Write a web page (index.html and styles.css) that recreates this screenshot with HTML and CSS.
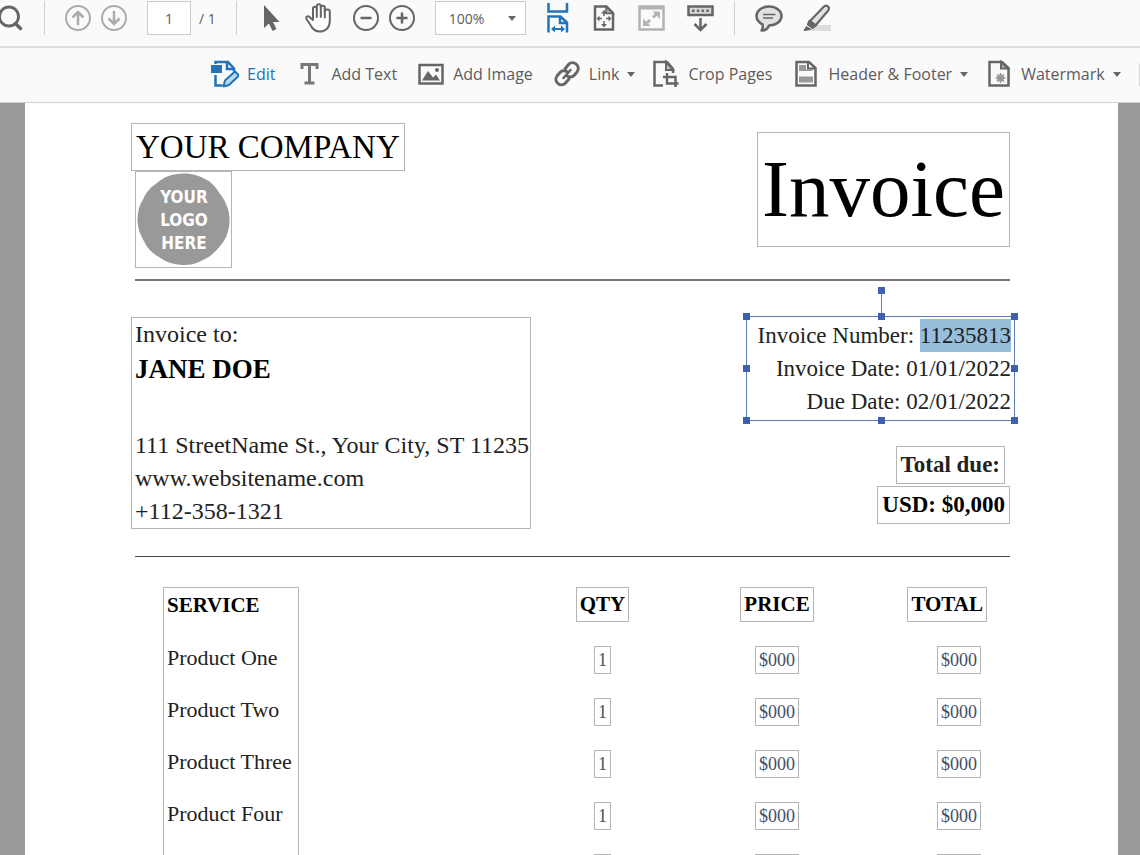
FILE: index.html
```html
<!DOCTYPE html>
<html lang="en">
<head>
  <meta charset="UTF-8">
  <meta name="viewport" content="width=device-width, initial-scale=1">
  <title>Invoice</title>
  <link rel="stylesheet" href="styles.css">
</head>
<body>
  <!-- View toolbar -->
  <div class="toolbar view-bar">
    <button class="icon-btn" aria-label="Search">
      <svg width="24" height="28" viewBox="0 0 24 28" fill="none" stroke="#666" stroke-width="2.800"><circle cx="9" cy="12.500" r="9.500"/><path d="M15.500 19.500L20.500 24.500" stroke-width="3.500" stroke-linecap="round"/></svg>
    </button>
    <span class="divider"></span>
    <div class="pair">
      <button class="icon-btn" aria-label="Previous page">
        <svg width="26" height="26" viewBox="0 0 26 26" fill="none" stroke="#ababab" stroke-width="2"><circle cx="13" cy="13" r="12"/><path d="M13 20V7M7.500 12.500L13 7l5.500 5.500" stroke-width="2.500"/></svg>
      </button>
      <button class="icon-btn" aria-label="Next page">
        <svg width="26" height="26" viewBox="0 0 26 26" fill="none" stroke="#ababab" stroke-width="2"><circle cx="13" cy="13" r="12"/><path d="M13 6v13M7.500 13.500L13 19l5.500-5.500" stroke-width="2.500"/></svg>
      </button>
    </div>
    <div class="pages">
      <input class="page-input" type="text" value="1" aria-label="Page number">
      <span>/ 1</span>
    </div>
    <span class="divider"></span>
    <button class="icon-btn" aria-label="Select">
      <svg width="28" height="30" viewBox="0 0 28 30"><path d="M7 2v23l5-4.500 3.500 7.500 4-2-3.500-7h6.500z" fill="#666"/></svg>
    </button>
    <button class="icon-btn" aria-label="Hand">
      <svg width="28" height="30" viewBox="0 0 28 30" fill="#fff" stroke="#666" stroke-width="2" stroke-linejoin="round" stroke-linecap="round"><path d="M8 17V5.500c0-2.500 3.800-2.500 3.800 0V3.300c0-2.700 4-2.700 4 0v1.400c0-2.500 4-2.500 4 0V8.500c0-2.600 5-2.600 5 0V18c0 6.500-4.300 10.500-10 10.500-4.800 0-7.300-2.500-9-6L1.500 16c-1-2.500 1.800-3.800 3.300-1.600z"/><path d="M11.800 5.500V14M15.800 4.500V14M19.800 5v9.500" fill="none"/></svg>
    </button>
    <div class="pair">
      <button class="icon-btn" aria-label="Zoom out">
        <svg width="26" height="26" viewBox="0 0 26 26" fill="none" stroke="#666" stroke-width="2"><circle cx="13" cy="13" r="12"/><path d="M7.500 13h11" stroke-width="2.500"/></svg>
      </button>
      <button class="icon-btn" aria-label="Zoom in">
        <svg width="26" height="26" viewBox="0 0 26 26" fill="none" stroke="#666" stroke-width="2"><circle cx="13" cy="13" r="12"/><path d="M7.500 13h11M13 7.500v11" stroke-width="2.500"/></svg>
      </button>
    </div>
    <div class="zoom">
      <select class="zoom-select" aria-label="Zoom level">
        <option>100%</option>
      </select>
      <span class="caret"></span>
    </div>
    <div class="fit">
      <button class="icon-btn" aria-label="Fit width">
        <svg width="24" height="30" viewBox="0 0 24 30" fill="none" stroke="#2373b9" stroke-width="2.500"><path d="M2.500 0v8.500h18.500V0M2.500 29.500V13.500h12l6.500 6v10M14 13.500v6.500h7"/><path d="M7 26h10" stroke-width="2"/><path d="M5 26l4-3.500v7zM19 26l-4-3.500v7z" fill="#2373b9" stroke="none"/></svg>
      </button>
      <button class="icon-btn" aria-label="Fit page">
        <svg width="24" height="28" viewBox="0 0 24 28" fill="none" stroke="#666" stroke-width="2.500"><path d="M3 2.500h11.500l6.500 6.500v16.500H3z"/><path d="M14 3v6.500h7z" fill="#aaa" stroke-width="1.500"/><path d="M12 8v4M12 17v5M6 14.500h4M14 14.500h4" stroke-width="1.500"/><path d="M12 6l3 3.500H9zM12 23.500l3-3.500H9zM4.500 14.500l3-3v6zM19.500 14.500l-3-3v6z" fill="#666" stroke="none"/></svg>
      </button>
      <button class="icon-btn" aria-label="Full screen">
        <svg width="27" height="28" viewBox="0 0 27 28" fill="none" stroke="#b3b3b3"><path d="M1.500 2.500h24v23h-24z" stroke-width="2.500"/><path d="M1 4h25" stroke-width="3"/><path d="M15 13.500l5-5M12 16l-5 5" stroke-width="3"/><path d="M14.500 7.500H22V15zM5 14.500V22h7.500z" fill="#b3b3b3" stroke="none"/></svg>
      </button>
      <button class="icon-btn" aria-label="Scrolling">
        <svg width="27" height="28" viewBox="0 0 27 28" fill="none" stroke="#666" stroke-width="2.500"><path d="M1.500 2.500h24v8.500h-24z" fill="#d8d8d8"/><path d="M5 6.700h17" stroke-dasharray="2.500 2.300"/><path d="M13.500 14v11.500M7.500 20l6 6 6-6"/></svg>
      </button>
    </div>
    <span class="divider"></span>
    <button class="icon-btn" aria-label="Comment">
      <svg width="28" height="28" viewBox="0 0 28 28" fill="#e2e2e2" stroke="#666" stroke-width="2.500" stroke-linejoin="round"><path d="M14 2.500c7 0 12.500 4 12.500 9.500S21 21.500 14 21.500c-1 3-4 5-7.500 5 1.500-2 1.500-4 1-6.200C4 18.500 1.500 15.500 1.500 12c0-5.500 5.500-9.500 12.500-9.500z"/><path d="M8 10.500h12.500M8 14h10" stroke-width="1.500"/></svg>
    </button>
    <button class="icon-btn" aria-label="Highlight">
      <svg width="28" height="28" viewBox="0 0 28 28" stroke="#666" stroke-width="2.200" stroke-linejoin="round"><path d="M11 21h17v6H7z" fill="#ddd" stroke="none"/><path d="M7 17L20.500 3c3-3 7 0 4.700 3.500L12.500 21.500z" fill="#e2e2e2"/><path d="M6.500 17l6 4.500-3 2.500-4.500-3.500z" fill="#666"/><path d="M3.500 22.500l4.500 3-7 1z" fill="#666" stroke-width="1"/></svg>
    </button>
  </div>

  <!-- Edit toolbar -->
  <div class="toolbar edit-bar">
    <button class="tool active">
      <svg width="28" height="30" viewBox="0 0 28 30" fill="none" stroke="#2373b9" stroke-width="2.500"><path d="M4.500 5V3h12.500l6 6.500v3M16 3v7h7M4.500 16v10.500h7"/><path d="M0 6h11v8H0z" fill="#2373b9" stroke="none"/><path d="M12.500 27.500l1.500-6L24 12.500l4 4-10 9.500z" fill="#b9dcf5" stroke-width="2" stroke-linejoin="round"/></svg>
      Edit
    </button>
    <button class="tool">
      <svg width="28" height="30" viewBox="0 0 28 30" fill="none" stroke="#777" stroke-width="3"><path d="M7 10V5.500h15V10M14.500 5.500V24M9.500 24h10"/></svg>
      Add Text
    </button>
    <button class="tool">
      <svg width="28" height="30" viewBox="0 0 28 30" fill="none" stroke="#666" stroke-width="2.500"><path d="M2.500 6h23v18.500h-23z"/><path d="M5 21.500l6-9.500 5 6.500 3-3 4 6z" fill="#666" stroke="none"/><circle cx="20" cy="11" r="2" fill="#666" stroke="none"/></svg>
      Add Image
    </button>
    <button class="tool has-menu">
      <svg width="28" height="30" viewBox="0 0 28 30" fill="none" stroke="#666" stroke-width="3" stroke-linecap="round"><path d="M12 10l3.500-4.500c4.500-5 13 1.500 8.500 7.500l-3 3.500c-2 2.300-5.500 2-7.500 0"/><path d="M16 20l-3.500 4c-4.500 5-12.500-1-8.500-7l3-3.500c2-2.200 5.500-2.200 7.500-.5"/><path d="M10.500 19l7-8" stroke-width="2.500"/></svg>
      Link
      <span class="caret"></span>
    </button>
    <button class="tool">
      <svg width="28" height="30" viewBox="0 0 28 30" fill="none" stroke="#666" stroke-width="2.500"><path d="M11 26.500H2.500V3h12.500l6 7v4"/><path d="M14 3v8h7z" fill="#ccc" stroke-width="2"/><path d="M11 18h12.500v10M15 14v10.500h11.500"/></svg>
      Crop Pages
    </button>
    <button class="tool has-menu">
      <svg width="28" height="30" viewBox="0 0 28 30" fill="none" stroke="#666" stroke-width="2.500"><path d="M4.500 3H17l6.500 6v17.500h-19z"/><path d="M7 6h7v4.500h6.500V12H7zM7 17.500h14v6H7z" fill="#999" stroke="none"/><path d="M16 3v6.500h7" stroke-width="2"/></svg>
      Header &amp; Footer
      <span class="caret"></span>
    </button>
    <button class="tool has-menu">
      <svg width="28" height="30" viewBox="0 0 28 30" fill="none" stroke="#666" stroke-width="2.500"><path d="M4.500 3H17l6.500 6v17.500h-19z"/><path d="M16 3v6.500h7z" fill="#bbb" stroke-width="2"/><circle cx="15.500" cy="19" r="3.500" fill="#999" stroke="none"/><path d="M15.500 14v10M10.500 19h10M12 15.500l7 7M19 15.500l-7 7" stroke="#999" stroke-width="1.500"/></svg>
      Watermark
      <span class="caret"></span>
    </button>
    <button class="tool" aria-label="More tools">
      <svg width="28" height="30" viewBox="0 0 28 30" fill="none" stroke="#666" stroke-width="2.500"><path d="M3 6h20v20H3z" fill="#aaa"/></svg>
    </button>
  </div>

  <main class="workspace">
    <div class="sheet">
      <header class="invoice-header">
        <div>
          <div class="box company">YOUR COMPANY</div>
          <div class="box logo">
            <svg width="95" height="95" viewBox="0 0 95 95">
              <path d="M47.500 1.500c8 0 14 1.500 20.500 5 7 3 11.500 8 15 14 5 6 8 12.500 9.500 18.500 1.500 8 1.500 13-.5 20-1.500 7-5.500 13-10.500 18-5 6-10.500 9.500-16.500 12-8 4-14.500 4.500-21 3.800-7-.5-14-2.800-19.500-6.800C17 82 11.500 77 8.500 70 4 63 1.500 55 1.500 47.500c0-8 2-15 6-21 3-7 8-12 13.500-15.500C28 5 36 1.500 47.500 1.500z" fill="#999"/>
              <g class="logo-text">
                <text x="48" y="31">YOUR</text>
                <text x="48" y="54">LOGO</text>
                <text x="48" y="77">HERE</text>
              </g>
            </svg>
          </div>
        </div>
        <h1 class="box title">Invoice</h1>
      </header>

      <section class="parties">
        <div class="box customer">
          <p>Invoice to:</p>
          <h2>JANE DOE</h2>
          <p>111 StreetName St., Your City, ST 11235</p>
          <p>www.websitename.com</p>
          <p>+112-358-1321</p>
        </div>
        <div class="summary">
          <div class="details">
            <p>Invoice Number: <span class="highlight">11235813</span></p>
            <p>Invoice Date: 01/01/2022</p>
            <p>Due Date: 02/01/2022</p>
            <!-- resize handles -->
            <span class="stem"></span>
            <span class="handle rotate"></span>
            <span class="handle top left"></span>
            <span class="handle top center"></span>
            <span class="handle top right"></span>
            <span class="handle middle left"></span>
            <span class="handle middle right"></span>
            <span class="handle bottom left"></span>
            <span class="handle bottom center"></span>
            <span class="handle bottom right"></span>
          </div>
          <div class="box due-label">Total due:</div>
          <div class="box due-amount">USD: $0,000</div>
        </div>
      </section>

      <table class="items">
        <thead>
          <tr>
            <th class="service"><div>SERVICE</div></th>
            <th class="qty"><span class="box">QTY</span></th>
            <th class="price"><span class="box">PRICE</span></th>
            <th class="total"><span class="box">TOTAL</span></th>
          </tr>
        </thead>
        <tbody>
          <tr>
            <td class="service"><div>Product One</div></td>
            <td class="qty"><span class="box">1</span></td>
            <td class="price"><span class="box">$000</span></td>
            <td class="total"><span class="box">$000</span></td>
          </tr>
          <tr>
            <td class="service"><div>Product Two</div></td>
            <td class="qty"><span class="box">1</span></td>
            <td class="price"><span class="box">$000</span></td>
            <td class="total"><span class="box">$000</span></td>
          </tr>
          <tr>
            <td class="service"><div>Product Three</div></td>
            <td class="qty"><span class="box">1</span></td>
            <td class="price"><span class="box">$000</span></td>
            <td class="total"><span class="box">$000</span></td>
          </tr>
          <tr>
            <td class="service"><div>Product Four</div></td>
            <td class="qty"><span class="box">1</span></td>
            <td class="price"><span class="box">$000</span></td>
            <td class="total"><span class="box">$000</span></td>
          </tr>
          <tr>
            <td class="service"><div>Product Five</div></td>
            <td class="qty"><span class="box">1</span></td>
            <td class="price"><span class="box">$000</span></td>
            <td class="total"><span class="box">$000</span></td>
          </tr>
        </tbody>
      </table>
    </div>
  </main>
</body>
</html>
```
FILE: styles.css
```css
* {
  box-sizing: border-box;
}

body {
  margin: 0;
  height: 100vh;
  display: flex;
  flex-direction: column;
  overflow: hidden;
  font-family: "Open Sans", "Noto Sans", sans-serif;
  color: #5c5c5c;
}

h1, h2, p {
  margin: 0;
}

/* Toolbars */
.toolbar {
  display: flex;
  flex-shrink: 0;
  align-items: center;
  gap: 20px;
  overflow: hidden;
  background-color: #fafafa;
  white-space: nowrap;
}

.toolbar > * {
  flex-shrink: 0;
}

.view-bar {
  height: 48px;
  padding-bottom: 10px;
  border-bottom: 2px solid #dcdcdc;
  font-size: 14px;
}

.edit-bar {
  height: 55px;
  padding: 0 0 2px 211px;
  border-bottom: 1px solid #d0d0d0;
}

button {
  padding: 0;
  border: none;
  background: none;
  font: inherit;
  color: inherit;
  cursor: pointer;
}

.icon-btn {
  display: flex;
}

.divider {
  width: 1px;
  height: 34px;
  background-color: #d0d0d0;
}

.pair {
  display: flex;
  gap: 10px;
}

.fit {
  display: flex;
  align-items: center;
  gap: 22px;
}

.pages {
  display: flex;
  align-items: center;
  gap: 8px;
}

.page-input {
  width: 44px;
  height: 34px;
  padding: 0;
  border: 1px solid #ccc;
  background-color: #fff;
  font: inherit;
  color: inherit;
  text-align: center;
}

.zoom {
  display: flex;
  position: relative;
}

.zoom-select {
  width: 91px;
  height: 34px;
  padding: 0 13px;
  border: 1px solid #ccc;
  border-radius: 0;
  background-color: #fff;
  appearance: none;
  font: inherit;
  color: inherit;
}

.caret {
  border: 4px solid transparent;
  border-top: 5px solid #666;
  border-bottom: none;
}

.zoom .caret {
  position: absolute;
  right: 10px;
  top: 15px;
  pointer-events: none;
}

.tool {
  display: flex;
  align-items: center;
  gap: 8px;
  font-size: 16px;
}

.has-menu {
  margin-right: -3px;
}

.active {
  color: #2373b9;
}

/* Page */
.workspace {
  flex: 1;
  min-height: 0;
  overflow: hidden;
  padding: 0 22px 0 25px;
  background-color: #999;
}

.sheet {
  min-height: 100%;
  padding: 20px 108px 0 110px;
  background-color: #fff;
  font-family: "Liberation Serif", serif;
  font-size: 23px;
  line-height: 33px;
  color: #222;
}

.box {
  border: 1px solid #b5b5b5;
  padding: 0 4px;
}

.invoice-header {
  display: flex;
  justify-content: space-between;
  align-items: flex-start;
  padding-bottom: 11px;
  border-bottom: 2px solid #777;
}

.company {
  margin-left: -4px;
  font-size: 33px;
  line-height: 46px;
  color: #000;
}

.logo {
  width: 97px;
  padding: 0;
}

.logo svg {
  display: block;
}

.logo-text {
  font: bold 17px "Liberation Sans Narrow", "DejaVu Sans Condensed", sans-serif;
  fill: #fff;
  text-anchor: middle;
}

.title {
  margin-top: 9px;
  font-size: 81px;
  font-weight: normal;
  line-height: 113px;
  color: #000;
}

.parties {
  display: flex;
  justify-content: space-between;
  align-items: flex-start;
  padding: 36px 0 27px;
  border-bottom: 1px solid #444;
}

.customer {
  width: 400px;
  margin-left: -4px;
  padding: 0 3px;
  font-size: 24px;
  white-space: nowrap;
}

.customer h2 {
  margin-bottom: 42px;
  font-size: 27px;
  line-height: 36px;
  color: #000;
}

.summary {
  display: flex;
  flex-direction: column;
  align-items: flex-end;
  margin-top: -1px;
}

/* Selected text box */
.details {
  position: relative;
  width: 269px;
  margin: 0 -5px 25px 0;
  padding: 2px 3px;
  border: 1px solid #5f7fb0;
  text-align: right;
}

.highlight {
  display: inline-block;
  background-color: #97bfdc;
}

.handle {
  position: absolute;
  width: 7px;
  height: 7px;
  background-color: #3f60ae;
}

.stem {
  position: absolute;
  left: 50%;
  top: -24px;
  height: 24px;
  border-left: 1px solid #5f7fb0;
}

.top { top: -4px; }
.middle { top: calc(50% - 4px); }
.bottom { bottom: -4px; }
.left { left: -4px; }
.center { left: calc(50% - 3px); }
.right { right: -4px; }

.rotate {
  left: calc(50% - 3px);
  top: -30px;
}

.due-label,
.due-amount {
  padding: 1px 4px 2px;
  font-weight: bold;
}

.due-label {
  margin: 0 5px 2px 0;
}

.due-amount {
  color: #000;
}

/* Items */
.items {
  width: calc(100% - 28px);
  margin: 30px 0 0 28px;
  border-collapse: collapse;
  table-layout: fixed;
  font-size: 22px;
}

.items th,
.items td {
  padding: 0;
  text-align: center;
  vertical-align: top;
}

.items th {
  height: 45px;
  font-size: 21px;
  color: #000;
}

.items .box {
  display: inline-block;
  padding: 0 3px;
}

.items td .box {
  margin-top: 14px;
  font-size: 18px;
  line-height: 26px;
  color: #444f66;
}

.items .service div {
  width: 136px;
  height: 52px;
  padding: 0 3px;
  border: 1px solid #b5b5b5;
  border-width: 0 1px;
  line-height: 52px;
  text-align: left;
}

.items th.service div {
  height: 45px;
  border-top-width: 1px;
  line-height: 35px;
}

.items .qty { width: 175px; }
.items .price { width: 174px; }

.items .total {
  width: 146px;
  padding-right: 29px;
  text-align: right;
}

.items th.total {
  padding-right: 23px;
}
```
